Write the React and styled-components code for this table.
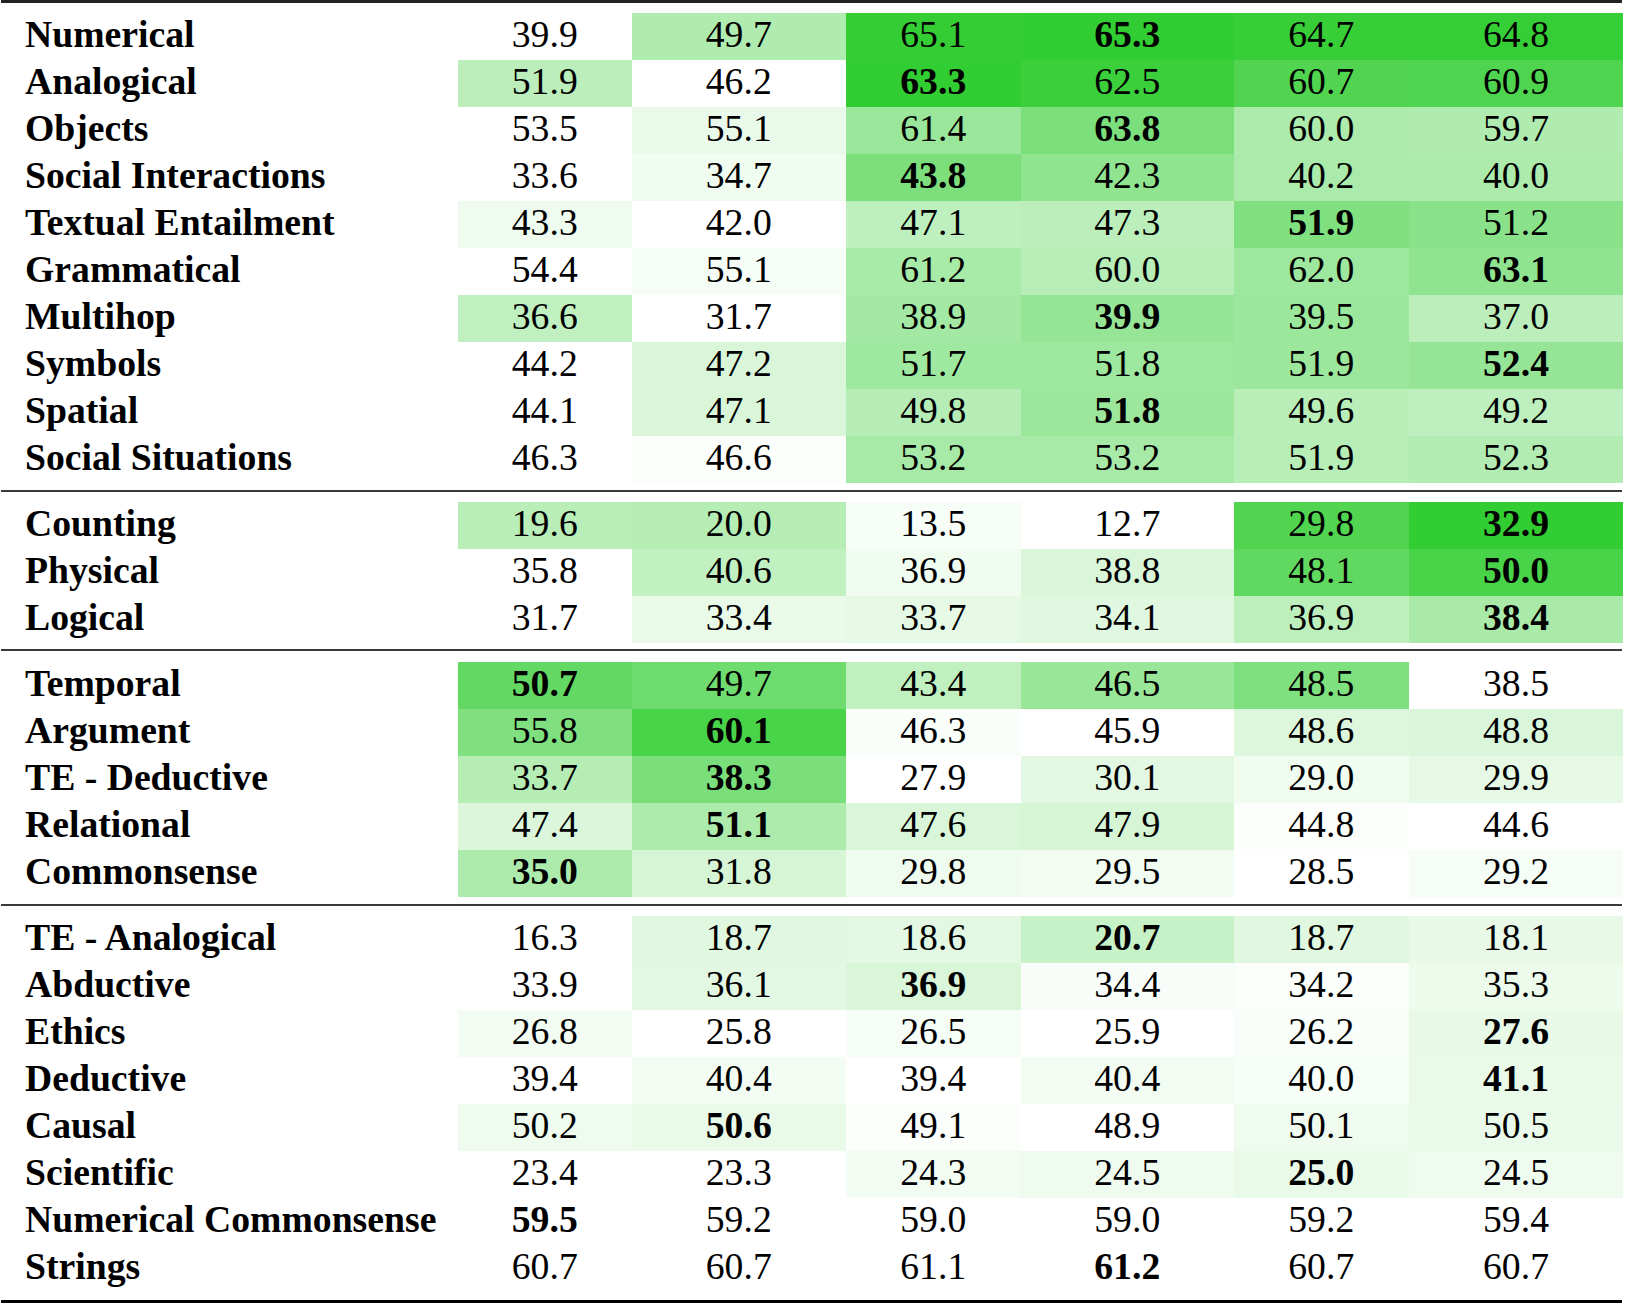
import React from 'react';
import styled, { createGlobalStyle } from 'styled-components';

const GlobalStyle = createGlobalStyle`
  html, body {
    margin: 0;
    padding: 0;
    background: #fff;
  }
  body {
    font-family: "Liberation Serif", "Times New Roman", serif;
    color: #000;
  }
`;

// label column + six data columns (cells alternate narrow / wide)
const COLUMNS = '457.5px 174.5px 213.5px 175.5px 212.5px 175.5px 214px';

const groups = [
  {
    top: 10,
    bottom: 7,
    rows: [
      ['Numerical', [39.9, 49.7, 65.1, 65.3, 64.7, 64.8]],
      ['Analogical', [51.9, 46.2, 63.3, 62.5, 60.7, 60.9]],
      ['Objects', [53.5, 55.1, 61.4, 63.8, 60.0, 59.7]],
      ['Social Interactions', [33.6, 34.7, 43.8, 42.3, 40.2, 40.0]],
      ['Textual Entailment', [43.3, 42.0, 47.1, 47.3, 51.9, 51.2]],
      ['Grammatical', [54.4, 55.1, 61.2, 60.0, 62.0, 63.1]],
      ['Multihop', [36.6, 31.7, 38.9, 39.9, 39.5, 37.0]],
      ['Symbols', [44.2, 47.2, 51.7, 51.8, 51.9, 52.4]],
      ['Spatial', [44.1, 47.1, 49.8, 51.8, 49.6, 49.2]],
      ['Social Situations', [46.3, 46.6, 53.2, 53.2, 51.9, 52.3]],
    ],
  },
  {
    top: 10,
    bottom: 6,
    rows: [
      ['Counting', [19.6, 20.0, 13.5, 12.7, 29.8, 32.9]],
      ['Physical', [35.8, 40.6, 36.9, 38.8, 48.1, 50.0]],
      ['Logical', [31.7, 33.4, 33.7, 34.1, 36.9, 38.4]],
    ],
  },
  {
    top: 11,
    bottom: 7,
    rows: [
      ['Temporal', [50.7, 49.7, 43.4, 46.5, 48.5, 38.5]],
      ['Argument', [55.8, 60.1, 46.3, 45.9, 48.6, 48.8]],
      ['TE - Deductive', [33.7, 38.3, 27.9, 30.1, 29.0, 29.9]],
      ['Relational', [47.4, 51.1, 47.6, 47.9, 44.8, 44.6]],
      ['Commonsense', [35.0, 31.8, 29.8, 29.5, 28.5, 29.2]],
    ],
  },
  {
    top: 10,
    bottom: 8,
    rows: [
      ['TE - Analogical', [16.3, 18.7, 18.6, 20.7, 18.7, 18.1]],
      ['Abductive', [33.9, 36.1, 36.9, 34.4, 34.2, 35.3]],
      ['Ethics', [26.8, 25.8, 26.5, 25.9, 26.2, 27.6]],
      ['Deductive', [39.4, 40.4, 39.4, 40.4, 40.0, 41.1]],
      ['Causal', [50.2, 50.6, 49.1, 48.9, 50.1, 50.5]],
      ['Scientific', [23.4, 23.3, 24.3, 24.5, 25.0, 24.5]],
      ['Numerical Commonsense', [59.5, 59.2, 59.0, 59.0, 59.2, 59.4]],
      ['Strings', [60.7, 60.7, 61.1, 61.2, 60.7, 60.7]],
    ],
  },
];

// white -> limegreen, scaled by distance from the row minimum
function shade(value, values) {
  const min = Math.min(...values);
  const max = Math.max(...values);
  if (max - min < 1) return '#fff';
  const t = Math.min(1, (value - min) / Math.max(max - min, 16));
  const rb = Math.round(255 - t * 205);
  const g = Math.round(255 - t * 50);
  return `rgb(${rb}, ${g}, ${rb})`;
}

function isBest(value, values) {
  const max = Math.max(...values);
  return value === max && values.filter((v) => v === max).length === 1;
}

const Sheet = styled.div`
  width: 1627px;
  height: 1304px;
  display: flex;
  flex-direction: column;
`;

const Rule = styled.div`
  height: ${({ weight }) => weight}px;
  background: ${({ tone }) => tone};
  margin: 0 5px 0 1px;
`;

const Group = styled.div`
  padding: ${({ top }) => top}px 0 ${({ bottom }) => bottom}px;
`;

const Row = styled.div`
  display: grid;
  grid-template-columns: ${COLUMNS};
  height: 47px;
`;

const Label = styled.div`
  padding: 0 0 4px 25px;
  font-size: 37.7px;
  line-height: 43px;
  font-weight: 700;
  white-space: nowrap;
`;

const Cell = styled.div`
  padding-bottom: 4px;
  text-align: center;
  font-size: 37.7px;
  line-height: 43px;
  font-weight: ${({ best }) => (best ? 700 : 400)};
  background: ${({ fill }) => fill};
`;

export default function App() {
  return (
    <>
      <GlobalStyle />
      <Sheet>
        <Rule weight={3} tone="#222" />
        {groups.map((group, gi) => (
          <React.Fragment key={gi}>
            <Group top={group.top} bottom={group.bottom}>
              {group.rows.map(([name, values]) => (
                <Row key={name}>
                  <Label>{name}</Label>
                  {values.map((v, i) => (
                    <Cell key={i} fill={shade(v, values)} best={isBest(v, values)}>
                      {v.toFixed(1)}
                    </Cell>
                  ))}
                </Row>
              ))}
            </Group>
            {gi < groups.length - 1 ? (
              <Rule weight={2} tone="#3a3a3a" />
            ) : (
              <Rule weight={3} tone="#000" />
            )}
          </React.Fragment>
        ))}
      </Sheet>
    </>
  );
}
